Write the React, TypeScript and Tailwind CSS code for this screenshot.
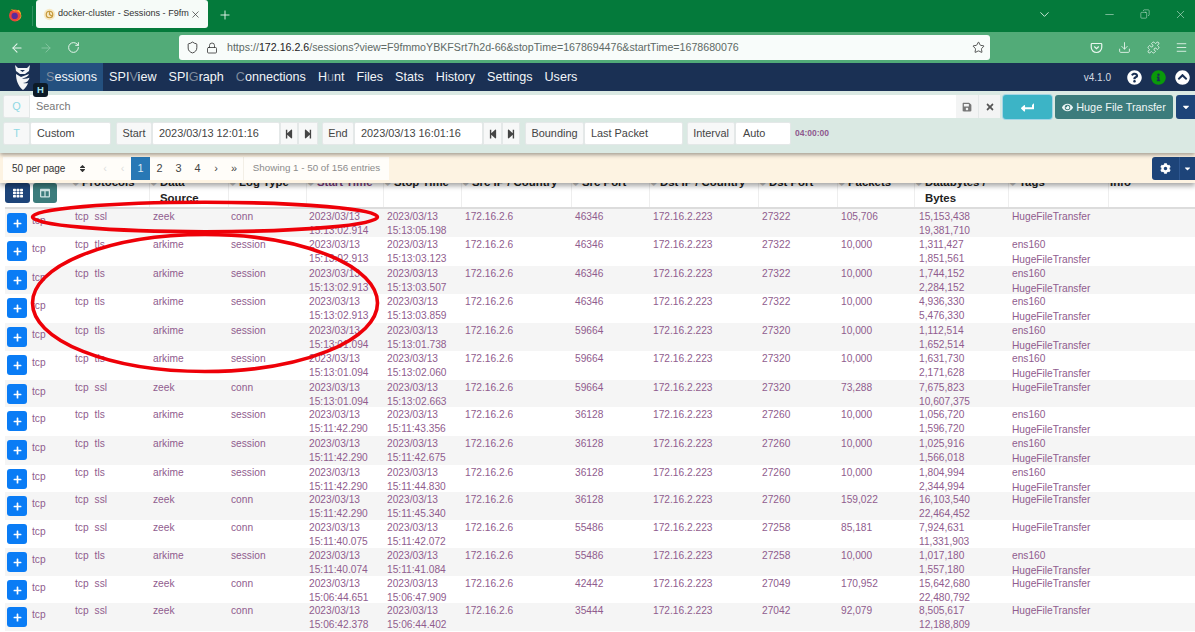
import React from "react";
import { ArrowLeft, ArrowRight, RotateCw, Shield, Star, Download, Puzzle, Menu, ChevronDown, Minus, X, Copy, Plus, Lock } from "lucide-react";
import { FaSave, FaTimes, FaLevelDownAlt, FaEye, FaCaretDown, FaCog, FaTh, FaColumns, FaPlus, FaStepBackward, FaStepForward, FaQuestionCircle, FaInfoCircle, FaChevronCircleUp, FaSort } from "react-icons/fa";

type Row = { h: number; p: string; ds: string; lt: string; st: string; et: string; sp: string; dp: string; pk: string; b1: string; b2: string; tags: string[] };
const mk = (h: number, p: string, st: string, et: string, sp: string, dp: string, pk: string, b1: string, b2: string): Row => {
  const zeek = p === "ssl";
  return { h, p, ds: zeek ? "zeek" : "arkime", lt: zeek ? "conn" : "session", st: "15:" + st, et: "15:" + et, sp, dp, pk, b1, b2, tags: zeek ? ["HugeFileTransfer"] : ["ens160", "HugeFileTransfer"] };
};
const rows: Row[] = [
  mk(28, "ssl", "13:02.914", "13:05.198", "46346", "27322", "105,706", "15,153,438", "19,381,710"),
  mk(29, "tls", "13:02.913", "13:03.123", "46346", "27322", "10,000", "1,311,427", "1,851,561"),
  mk(28, "tls", "13:02.913", "13:03.507", "46346", "27322", "10,000", "1,744,152", "2,284,152"),
  mk(29, "tls", "13:02.913", "13:03.859", "46346", "27322", "10,000", "4,936,330", "5,476,330"),
  mk(28, "tls", "13:01.094", "13:01.738", "59664", "27320", "10,000", "1,112,514", "1,652,514"),
  mk(29, "tls", "13:01.094", "13:02.060", "59664", "27320", "10,000", "1,631,730", "2,171,628"),
  mk(27, "ssl", "13:01.094", "13:02.663", "59664", "27320", "73,288", "7,675,823", "10,607,375"),
  mk(29, "tls", "11:42.290", "11:43.356", "36128", "27260", "10,000", "1,056,720", "1,596,720"),
  mk(29, "tls", "11:42.290", "11:42.675", "36128", "27260", "10,000", "1,025,916", "1,566,018"),
  mk(27, "tls", "11:42.290", "11:44.830", "36128", "27260", "10,000", "1,804,994", "2,344,994"),
  mk(28, "ssl", "11:42.290", "11:45.340", "36128", "27260", "159,022", "16,103,540", "22,464,452"),
  mk(28, "ssl", "11:40.075", "11:42.072", "55486", "27258", "85,181", "7,924,631", "11,331,903"),
  mk(28, "tls", "11:40.074", "11:41.084", "55486", "27258", "10,000", "1,017,180", "1,557,180"),
  mk(27, "ssl", "06:44.651", "06:47.909", "42442", "27049", "170,952", "15,642,680", "22,480,792"),
  mk(28, "ssl", "06:42.378", "06:44.402", "35444", "27042", "92,079", "8,505,617", "12,188,809"),
];

const Dim = ({ c }: { c: string }) => <span className="text-[#7f8a9c]">{c}</span>;

function NavItem({ children, active }: { children: React.ReactNode; active?: boolean }) {
  return <div className={`h-full flex items-center px-[6px] pt-[1px] ${active ? "bg-[#24507f]" : ""}`}>{children}</div>;
}

function Addon({ children, cls = "" }: { children: React.ReactNode; cls?: string }) {
  return <div className={`h-[23px] bg-[#f7f8f8] border border-[#e4e8e8] rounded-[2px] flex items-center text-[10.9px] shrink-0 ${cls}`}>{children}</div>;
}
function Field({ children, cls = "" }: { children: React.ReactNode; cls?: string }) {
  return <div className={`h-[23px] bg-white border border-[#e4e8e8] rounded-[2px] flex items-center text-[10.9px] text-[#444] shrink-0 ${cls}`}>{children}</div>;
}
function Step({ icon, w }: { icon: React.ReactNode; w: string }) {
  return <div className={`h-[23px] ${w} bg-[#f7f8f8] border border-[#e4e8e8] flex items-center justify-center text-[#444] text-[10px] shrink-0`}>{icon}</div>;
}
function Page({ children, cls = "" }: { children: React.ReactNode; cls?: string }) {
  return <div className={`h-[23px] flex items-center justify-center text-[10.9px] shrink-0 ${cls}`}>{children}</div>;
}

const hCols: [string, string, string?][] = [
  ["w-[79px]", "Data", "Source"],
  ["w-[78px]", "Log Type"],
  ["w-[77px]", "Start Time"],
  ["w-[78px]", "Stop Time"],
  ["w-[110px]", "Src IP / Country"],
  ["w-[78px]", "Src Port"],
  ["w-[109px]", "Dst IP / Country"],
  ["w-[79px]", "Dst Port"],
  ["w-[77px]", "Packets"],
  ["w-[94px]", "Databytes /", "Bytes"],
  ["w-[100px]", "Tags"],
];

function Firefox() {
  return (
    <svg width="14" height="14" viewBox="0 0 16 16">
      <circle cx="8" cy="8.6" r="6.8" fill="#e8453c" />
      <circle cx="7.6" cy="9" r="3.600" fill="#5b2a9c" />
      <path d="M3 2c2 0 3 1 4 2 3-1 7 1 8 5 .3-3-1-6-3-7-1 1-2 1-3 1C7 2 5 1 3 2z" fill="#f9a825" />
      <path d="M14.600 7c.6 3-1.400 7-6 7.600 3 .4 6-2 6.600-5 .1-1-.2-2-.6-2.600z" fill="#fbc02d" />
    </svg>
  );
}

function SortMark() {
  return <span className="inline-block w-[9px] text-[#c4c4c4] text-[7px] align-[1px]">◆</span>;
}

export default function App() {
  return (
    <div className="w-[1195px] h-[632px] overflow-hidden relative bg-white font-['Liberation_Sans',Arial,sans-serif]">
      {/* tab strip */}
      <div className="h-[32px] bg-[#047a3b] flex items-end text-white relative">
        <div className="w-[33px] h-[32px] flex items-center pl-[8px] pb-[2px] shrink-0"><Firefox /></div>
        <div className="w-[1px] h-[20px] bg-[#2f9160] self-center -ml-[1px]" />
        <div className="ml-[3px] mb-[4px] w-[172px] h-[28px] bg-[#f6fbf8] rounded-[3px] flex items-center pl-[7px] text-[#333] shrink-0">
          <svg width="13" height="13" viewBox="0 0 16 16" className="shrink-0 mr-[2px]">
            <circle cx="8" cy="8" r="7" fill="#f7e9c4" />
            <circle cx="8" cy="8" r="4" fill="none" stroke="#c59a3c" strokeWidth="1.5" />
            <path d="M8 4v4l3 2" fill="none" stroke="#c59a3c" strokeWidth="1.5" />
          </svg>
          <span className="text-[9.1px] whitespace-nowrap w-[132px] overflow-hidden">docker-cluster - Sessions - F9fm</span>
          <X size={11} strokeWidth={1.5} className="shrink-0" />
        </div>
        <Plus size={14} strokeWidth={1.6} className="ml-[10px] mb-[10px] text-[#e8f5ee]" />
        <div className="ml-auto h-full flex items-center pb-[4px] text-[#d8efe2]">
          <ChevronDown size={15} strokeWidth={1.5} className="mr-[51px]" />
          <Minus size={13} strokeWidth={1} className="mr-[24px]" />
          <Copy size={10} strokeWidth={1.2} className="mr-[24px] scale-x-[-1]" />
          <X size={13} strokeWidth={1} className="mr-[8px]" />
        </div>
      </div>
      {/* url bar */}
      <div className="h-[31px] bg-[#52ab78] flex items-center text-[#e9f6ef]">
        <ArrowLeft size={14} strokeWidth={1.8} className="ml-[10px]" />
        <ArrowRight size={14} strokeWidth={1.6} className="ml-[15px] text-[#86c7a2]" />
        <RotateCw size={13} strokeWidth={1.8} className="ml-[14px]" />
        <div className="ml-[99px] w-[811px] h-[25px] bg-[#f8fcfa] rounded-[3px] flex items-center text-[#333] shrink-0">
          <Shield size={13} strokeWidth={1.6} className="ml-[7px]" />
          <Lock size={12} strokeWidth={1.6} className="ml-[7px]" />
          <span className="ml-[9px] text-[10.65px] text-[#5e6a66] whitespace-nowrap">https://<span className="text-[#222]">172.16.2.6</span>/sessions?view=F9fmmoYBKFSrt7h2d-66&amp;stopTime=1678694476&amp;startTime=1678680076</span>
          <Star size={13} strokeWidth={1.5} className="ml-auto mr-[5px]" />
        </div>
        <div className="ml-auto flex items-center">
          <svg width="13" height="12" viewBox="0 0 16 16" className="mr-[15px]" fill="none" stroke="currentColor" strokeWidth="1.6"><path d="M2 2h12a1 1 0 0 1 1 1v4a7 7 0 0 1-14 0V3a1 1 0 0 1 1-1z" /><path d="M5 6l3 3 3-3" /></svg>
          <Download size={13} strokeWidth={1.6} className="mr-[16px]" />
          <Puzzle size={13} strokeWidth={1.6} className="mr-[15px]" />
          <Menu size={13} strokeWidth={1.6} className="mr-[7px]" />
        </div>
      </div>
      {/* app nav */}
      <div className="h-[28px] bg-[#1a3054] flex items-center text-[12.6px] text-[#f2f5f8] relative z-20">
        <div className="w-[40px] h-full flex items-center justify-start pl-[15px] relative shrink-0">
          <svg width="15" height="26" viewBox="0 0 15 26">
            <path d="M0 1l3 3h9l3-3-1 6-4 3H5L1 7z" fill="#f4f6f8" />
            <path d="M5 6l2.500 2L10 6z" fill="#1a3054" />
            <path d="M1 10l5 3 8-3c-.5 2-3 4-7 4.500 2.500.5 5 .2 7.500-.8-.6 3-3 5-6.500 5.300 2 .6 3.500.3 5 0C12 22 10 24.500 8 26 3 22 1 16 1 10z" fill="#f4f6f8" />
          </svg>
          <div className="absolute left-[33px] top-[20px] w-[15px] h-[14px] bg-[#0d1a26] rounded-[3px] flex items-center justify-center text-[9.5px] font-bold text-[#9fe0ea]">H</div>
        </div>
        <NavItem active><span><Dim c="S" />essions</span></NavItem>
        <NavItem><span>SPI<Dim c="V" />iew</span></NavItem>
        <NavItem><span>SPI<Dim c="G" />raph</span></NavItem>
        <NavItem><span><Dim c="C" />onnections</span></NavItem>
        <NavItem><span>H<Dim c="u" />nt</span></NavItem>
        <NavItem>Files</NavItem>
        <NavItem>Stats</NavItem>
        <NavItem>History</NavItem>
        <NavItem>Settings</NavItem>
        <NavItem>Users</NavItem>
        <div className="ml-auto flex items-center text-white">
          <span className="text-[10px] text-[#d5dbe3] mr-[16px]">v4.1.0</span>
          <FaQuestionCircle size={15} className="mr-[9px]" />
          <FaInfoCircle size={15} className="mr-[9px] text-[#0a9a0a]" />
          <FaChevronCircleUp size={15} className="mr-[5px]" />
        </div>
      </div>
      {/* search panel */}
      <div className="h-[62px] bg-[#dae9e3] shadow-[0_2px_4px_rgba(0,0,0,0.35)] relative z-10 pt-[4px] pl-[3px]">
        <div className="flex h-[23px]">
          <div className="w-[27px] h-[23px] bg-[#f7f8f8] border border-[#e4e8e8] rounded-l-[2px] flex items-center justify-center text-[10.9px] text-[#8fd8e4] shrink-0">Q</div>
          <div className="w-[926px] h-[23px] bg-white flex items-center pl-[6px] text-[10.9px] text-[#777] shrink-0">Search</div>
          <div className="w-[22px] h-[23px] bg-[#f3f4f4] flex items-center justify-center text-[#777] shrink-0"><FaSave size={10} /></div>
          <div className="w-[22px] h-[23px] bg-[#f3f4f4] border-l border-[#e4e8e8] flex items-center justify-center text-[#555] shrink-0"><FaTimes size={10} /></div>
          <div className="ml-[3px] w-[49px] h-[24px] bg-[#3cb4c6] rounded-[3px] shadow-[0_0_0_1px_#a5d6e6] flex items-center justify-center text-white shrink-0"><FaLevelDownAlt size={13} className="rotate-90" /></div>
          <div className="ml-[3px] w-[118px] h-[24px] bg-[#3c7c7c] rounded-[3px] flex items-center justify-center gap-[3px] text-[10.9px] text-[#eef6f6] whitespace-nowrap shrink-0"><FaEye size={11} />Huge File Transfer</div>
          <div className="ml-[3px] w-[19px] h-[24px] bg-[#1d4479] rounded-l-[3px] flex items-center justify-center text-white shrink-0"><FaCaretDown size={10} /></div>
        </div>
        <div className="flex items-center mt-[4px]">
          <Addon cls="w-[27px] justify-center text-[#8fd8e4]">T</Addon>
          <Field cls="w-[81px] pl-[6px]">Custom</Field>
          <Addon cls="ml-[5px] w-[36px] justify-center text-[#444]">Start</Addon>
          <Field cls="w-[128px] pl-[6px]">2023/03/13 12:01:16</Field>
          <Step w="w-[18px]" icon={<FaStepBackward />} />
          <Step w="w-[20px]" icon={<FaStepForward />} />
          <Addon cls="ml-[4px] w-[32px] justify-center text-[#444]">End</Addon>
          <Field cls="w-[129px] pl-[6px]">2023/03/13 16:01:16</Field>
          <Step w="w-[19px]" icon={<FaStepBackward />} />
          <Step w="w-[18px]" icon={<FaStepForward />} />
          <Addon cls="ml-[5px] w-[59px] justify-center text-[#444]">Bounding</Addon>
          <Field cls="w-[99px] pl-[6px]">Last Packet</Field>
          <Addon cls="ml-[4px] w-[48px] justify-center text-[#444]">Interval</Addon>
          <Field cls="w-[56px] pl-[7px]">Auto</Field>
          <span className="ml-[4px] text-[8.5px] font-bold text-[#8e5a8e]">04:00:00</span>
        </div>
      </div>
      {/* paging bar */}
      <div className="h-[30px] bg-[#fdf3e2] shadow-[0_3px_5px_rgba(0,0,0,0.35)] relative z-[5] flex items-center pl-[3px]">
        <div className="w-[93px] h-[23px] bg-[#fffdf9] flex items-center justify-between pl-[9px] pr-[9px] text-[10px] text-[#333] shrink-0"><span>50 per page</span><FaSort size={9} /></div>
        <Page cls="w-[18px] bg-[#fffdf9] text-[#ddd]">‹</Page>
        <Page cls="w-[17px] bg-[#fffdf9] text-[#ddd]">‹</Page>
        <Page cls="w-[19px] bg-[#2878b5] text-[#dbe9f5]">1</Page>
        <Page cls="w-[19px] bg-[#fffdf9] text-[#444]">2</Page>
        <Page cls="w-[19px] bg-[#fffdf9] text-[#444]">3</Page>
        <Page cls="w-[19px] bg-[#fffdf9] text-[#444]">4</Page>
        <Page cls="w-[18px] bg-[#fffdf9] text-[#444]">›</Page>
        <Page cls="w-[18px] bg-[#fffdf9] text-[#444]">»</Page>
        <Page cls="w-[146px] border-l border-[#f3efe6] bg-[#fffdf9] text-[#8b8b8b]"><span className="text-[9.8px] whitespace-nowrap">Showing 1 - 50 of 156 entries</span></Page>
        <div className="ml-auto h-[23px] w-[43px] bg-[#1d4479] rounded-l-[3px] flex items-center text-white shrink-0">
          <div className="w-[27px] flex justify-center"><FaCog size={11} /></div>
          <div className="flex-1 flex justify-center border-l border-[#2d5690] h-full items-center"><FaCaretDown size={9} /></div>
        </div>
      </div>
      {/* table */}
      <div className="-mt-[8px] pl-[5px]">
        <div className="flex h-[34px] border-b-2 border-[#dcdcdc] text-[11.4px] font-bold text-[#222] leading-[15px]">
          <div className="w-[69px] flex items-end gap-[3px] pb-[4px] shrink-0">
            <div className="w-[25px] h-[20px] bg-[#1d4479] rounded-[3px] flex items-center justify-center text-white text-[10px]"><FaTh /></div>
            <div className="w-[24px] h-[20px] bg-[#3c7c7c] rounded-[3px] flex items-center justify-center text-[#cfe4e4] text-[10px]"><FaColumns /></div>
          </div>
          <div className="w-[75px] shrink-0 whitespace-nowrap -ml-[1px] mr-[1px]"><SortMark />Protocols</div>
          {hCols.map(([w, t, second]) => (
            <div key={t} className={`${w} pl-[1px] border-l border-[#eeeeee] shrink-0 whitespace-nowrap`}>
              <SortMark />{t === "Start Time" ? <span className="text-[#7a3a7a]">{t}</span> : t}
              {second && <div className="mt-[1px] pl-[9px]">{second}</div>}
            </div>
          ))}
          <div className="pl-[1px] border-l border-[#eeeeee]">Info</div>
        </div>
        {rows.map((r, i) => (
          <div key={i} style={{ height: r.h }} className={`flex text-[10.2px] leading-[13.7px] text-[#905c8e] ${i % 2 === 0 ? "bg-[#f5f5f5]" : "bg-white"}`}>
            <div className="w-[69px] shrink-0 flex items-start pt-[4px] pl-[2px]">
              <div className="w-[20px] h-[20px] bg-[#0a7cf5] rounded-[3px] flex items-center justify-center text-white text-[9px] shrink-0"><FaPlus /></div>
              <span className="ml-[5px] mt-[1px]">tcp</span>
            </div>
            <div className="w-[79px] shrink-0 pl-[1px] pt-[1px]"><span>tcp</span><span className="ml-[6px]">{r.p}</span></div>
            <div className="w-[78px] shrink-0 pt-[1px]">{r.ds}</div>
            <div className="w-[78px] shrink-0 pt-[1px]">{r.lt}</div>
            <div className="w-[78px] shrink-0 pt-[1px]">2023/03/13<br />{r.st}</div>
            <div className="w-[78px] shrink-0 pt-[1px]">2023/03/13<br />{r.et}</div>
            <div className="w-[110px] shrink-0 pt-[1px]">172.16.2.6</div>
            <div className="w-[78px] shrink-0 pt-[1px]">{r.sp}</div>
            <div className="w-[109px] shrink-0 pt-[1px]">172.16.2.223</div>
            <div className="w-[79px] shrink-0 pt-[1px]">{r.dp}</div>
            <div className="w-[78px] shrink-0 pt-[1px]">{r.pk}</div>
            <div className="w-[93px] shrink-0 pt-[1px]">{r.b1}<br />{r.b2}</div>
            <div className="shrink-0 pt-[1px] leading-[14.5px]">{r.tags.map((t) => <div key={t}>{t}</div>)}</div>
          </div>
        ))}
      </div>
      {/* annotation */}
      <svg className="absolute left-0 top-0 pointer-events-none z-30" width="1195" height="632" fill="none" stroke="#ee0008" strokeWidth="3.6">
        <ellipse cx="205" cy="217" rx="172.500" ry="14.700" />
        <ellipse cx="205" cy="303" rx="172.500" ry="68.500" />
      </svg>
    </div>
  );
}
